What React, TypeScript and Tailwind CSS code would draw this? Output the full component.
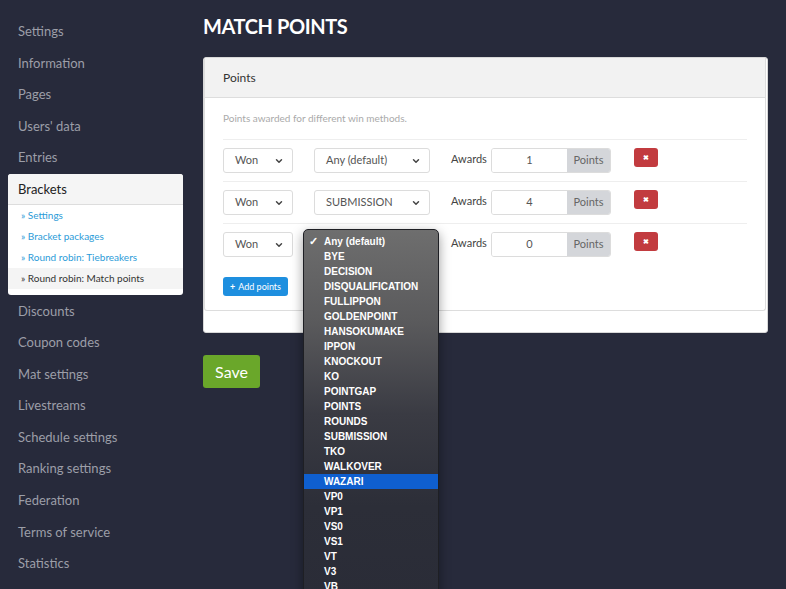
import React from "react";
import { ChevronDown } from "lucide-react";

const font = { fontFamily: "Lato, 'Noto Sans', 'Liberation Sans', sans-serif" };

const topItems = ["Settings", "Information", "Pages", "Users' data", "Entries"];
const bottomItems = [
  "Discounts",
  "Coupon codes",
  "Mat settings",
  "Livestreams",
  "Schedule settings",
  "Ranking settings",
  "Federation",
  "Terms of service",
  "Statistics",
];
const subItems = ["Settings", "Bracket packages", "Round robin: Tiebreakers"];

const options = [
  "Any (default)",
  "BYE",
  "DECISION",
  "DISQUALIFICATION",
  "FULLIPPON",
  "GOLDENPOINT",
  "HANSOKUMAKE",
  "IPPON",
  "KNOCKOUT",
  "KO",
  "POINTGAP",
  "POINTS",
  "ROUNDS",
  "SUBMISSION",
  "TKO",
  "WALKOVER",
  "WAZARI",
  "VP0",
  "VP1",
  "VS0",
  "VS1",
  "VT",
  "V3",
  "VB",
];

function Select({ w, label }: { w: string; label: string }) {
  return (
    <div
      className={`${w} h-[25px] border border-[#dcdcdc] rounded-[3px] bg-white flex items-center justify-between pl-[11px] pr-[8px] text-[11px] text-[#555]`}
    >
      <span>{label}</span>
      <ChevronDown size={10} strokeWidth={3.5} className="text-[#444]" />
    </div>
  );
}

function Dropdown() {
  return (
    <div className="absolute left-[-11px] top-[-3px] w-[136px] h-[370px] rounded-[5px] border border-[#1e1f24] bg-[linear-gradient(180deg,#6e6e6e_0%,#5a5a5c_25%,#3a3b43_50%,#2c2e38_75%,#2a2c37_100%)] pt-[4px] z-10 shadow-[0_4px_12px_rgba(0,0,0,0.4)]">
      {options.map((o, i) => (
        <div
          key={o}
          className={`relative h-[15px] flex items-center pl-[20px] text-[10px] font-bold text-white ${
            o === "WAZARI" ? "bg-[#0f5fcf]" : ""
          }`}
          style={{ fontFamily: "'Liberation Sans', Arial, sans-serif" }}
        >
          {i === 0 && <span className="absolute left-[5px] text-[11px]">✓</span>}
          {o}
        </div>
      ))}
    </div>
  );
}

function Row({ value, method, open, last }: { value: string; method: string; open?: boolean; last?: boolean }) {
  return (
    <div className={`h-[42px] flex items-start pt-[8px] ${last ? "" : "border-b border-[#eeeeee]"}`}>
      <Select w="w-[70px]" label="Won" />
      <div className="relative ml-[21px]">
        {open ? <div className="w-[116px] h-[25px]" /> : <Select w="w-[116px]" label={method} />}
        {open && <Dropdown />}
      </div>
      <span className="ml-[21px] w-[35px] mt-[3px] text-[11px] text-[#444] whitespace-nowrap">Awards</span>
      <div className="ml-[5px] flex h-[25px] w-[120px] rounded-[3px] border border-[#dcdcdc] overflow-hidden">
        <div className="w-[75px] bg-white flex items-center justify-center text-[11px] text-[#555]">{value}</div>
        <div className="flex-1 bg-[#d4d6da] flex items-center justify-center text-[11px] text-[#666]">Points</div>
      </div>
      <div className="ml-[23px] w-[24px] h-[19px] rounded-[3px] bg-[#c23b3f] flex items-center justify-center text-white text-[7px] font-bold">
        ✖
      </div>
    </div>
  );
}

export default function App() {
  return (
    <div className="w-[786px] h-[589px] overflow-hidden bg-[#272a3b] flex" style={font}>
      <aside className="w-[175px] ml-[8px] pt-[16px] shrink-0">
        {topItems.map((t) => (
          <div key={t} className="h-[31.6px] flex items-center pl-[10px] text-[13px] text-[#9c9ea8]">
            {t}
          </div>
        ))}
        <div className="bg-white rounded-[3px] pb-[6px] overflow-hidden">
          <div className="h-[31px] bg-[#f5f5f5] border-b border-[#dddddd] flex items-center pl-[10px] pt-[1px] text-[13px] text-[#222]">
            Brackets
          </div>
          {subItems.map((s) => (
            <div key={s} className="h-[21px] flex items-center pl-[13px] pt-[1px] text-[10px] text-[#2b9bd8]">
              » {s}
            </div>
          ))}
          <div className="h-[21px] flex items-center pl-[13px] pt-[1px] text-[10px] text-[#333] bg-[#f4f4f4]">
            » Round robin: Match points
          </div>
        </div>
        {bottomItems.map((t) => (
          <div key={t} className="h-[31.6px] flex items-center pl-[10px] pt-[1px] text-[13px] text-[#9c9ea8]">
            {t}
          </div>
        ))}
      </aside>
      <main className="ml-[20px] w-[565px] pt-[12px]">
        <h1 className="h-[28px] leading-[28px] text-[20px] font-bold text-white tracking-[-0.4px]">MATCH POINTS</h1>
        <div className="mt-[17px] bg-white rounded-[3px] pb-[21px] border border-[#d8d8d8]">
          <div className="border border-[#dddddd] border-t-0 rounded-b-[3px] mr-[1px]">
            <div className="h-[40px] bg-[#f2f2f2] border-b border-[#dddddd] flex items-center pl-[18px] text-[12px] text-[#333]">
              Points
            </div>
            <div className="px-[18px]">
              <div className="h-[42px] flex items-center text-[10px] text-[#aaaaaa] border-b border-[#eeeeee]">
                Points awarded for different win methods.
              </div>
              <Row value="1" method="Any (default)" />
              <Row value="4" method="SUBMISSION" />
              <Row value="0" method="Any (default)" open last />
              <div className="pt-[11px] pb-[14px]">
                <div className="w-[65px] h-[19px] rounded-[3px] bg-[#1e8fdf] flex items-center justify-center text-[9px] text-white">
                  <span className="font-bold mr-[3px]">+</span>Add points
                </div>
              </div>
            </div>
          </div>
        </div>
        <div className="mt-[22px] w-[57px] h-[33px] rounded-[3px] bg-[#6aa72a] flex items-center justify-center text-[16px] text-white">
          Save
        </div>
      </main>
    </div>
  );
}
